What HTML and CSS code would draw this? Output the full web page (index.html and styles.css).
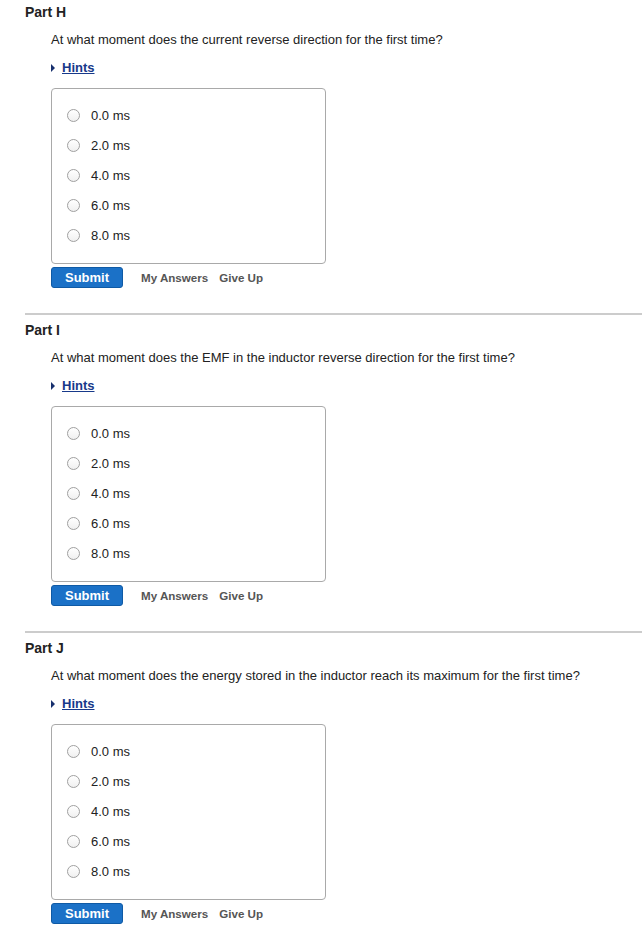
FILE: index.html
```html
<!DOCTYPE html>
<html>
<head>
<meta charset="utf-8">
<link rel="stylesheet" href="styles.css">
</head>
<body>
<div class="page">
  <section class="part">
    <h2 class="part-title">Part H</h2>
    <div class="part-body">
      <p class="question">At what moment does the current reverse direction for the first time?</p>
      <div class="hints"><span class="tri"></span><a href="#" class="hints-link">Hints</a></div>
      <div class="choices">
        <label class="choice"><span class="radio"></span><span>0.0 ms</span></label>
        <label class="choice"><span class="radio"></span><span>2.0 ms</span></label>
        <label class="choice"><span class="radio"></span><span>4.0 ms</span></label>
        <label class="choice"><span class="radio"></span><span>6.0 ms</span></label>
        <label class="choice"><span class="radio"></span><span>8.0 ms</span></label>
      </div>
      <div class="actions">
        <button class="submit">Submit</button>
        <a href="#" class="action-link">My Answers</a>
        <a href="#" class="action-link">Give Up</a>
      </div>
    </div>
  </section>
  <section class="part">
    <h2 class="part-title">Part I</h2>
    <div class="part-body">
      <p class="question">At what moment does the EMF in the inductor reverse direction for the first time?</p>
      <div class="hints"><span class="tri"></span><a href="#" class="hints-link">Hints</a></div>
      <div class="choices">
        <label class="choice"><span class="radio"></span><span>0.0 ms</span></label>
        <label class="choice"><span class="radio"></span><span>2.0 ms</span></label>
        <label class="choice"><span class="radio"></span><span>4.0 ms</span></label>
        <label class="choice"><span class="radio"></span><span>6.0 ms</span></label>
        <label class="choice"><span class="radio"></span><span>8.0 ms</span></label>
      </div>
      <div class="actions">
        <button class="submit">Submit</button>
        <a href="#" class="action-link">My Answers</a>
        <a href="#" class="action-link">Give Up</a>
      </div>
    </div>
  </section>
  <section class="part">
    <h2 class="part-title">Part J</h2>
    <div class="part-body">
      <p class="question">At what moment does the energy stored in the inductor reach its maximum for the first time?</p>
      <div class="hints"><span class="tri"></span><a href="#" class="hints-link">Hints</a></div>
      <div class="choices">
        <label class="choice"><span class="radio"></span><span>0.0 ms</span></label>
        <label class="choice"><span class="radio"></span><span>2.0 ms</span></label>
        <label class="choice"><span class="radio"></span><span>4.0 ms</span></label>
        <label class="choice"><span class="radio"></span><span>6.0 ms</span></label>
        <label class="choice"><span class="radio"></span><span>8.0 ms</span></label>
      </div>
      <div class="actions">
        <button class="submit">Submit</button>
        <a href="#" class="action-link">My Answers</a>
        <a href="#" class="action-link">Give Up</a>
      </div>
    </div>
  </section>
</div>
</body>
</html>
```
FILE: styles.css
```css
html, body {
  margin: 0;
  padding: 0;
  background: #fff;
}
body {
  font-family: "Liberation Sans", Arial, Helvetica, sans-serif;
  color: #222;
}
.page {
  padding-left: 25px;
  padding-top: 4px;
}
.part {
  padding-bottom: 25px;
}
.part + .part {
  border-top: 2px solid #cccccc;
  padding-top: 7px;
}
.part-title {
  margin: 0;
  font-size: 14px;
  line-height: 16px;
  font-weight: bold;
  color: #222;
}
.part-body {
  margin-left: 26px;
}
.question {
  margin: 12px 0 0 0;
  font-size: 13px;
  line-height: 15px;
  color: #222;
}
.hints {
  margin-top: 13px;
  display: flex;
  align-items: center;
  font-size: 13px;
  line-height: 15px;
}
.tri {
  width: 0;
  height: 0;
  border-top: 4px solid transparent;
  border-bottom: 4px solid transparent;
  border-left: 4px solid #17306e;
  margin-right: 7px;
}
.hints-link {
  color: #17398a;
  font-weight: bold;
  text-decoration: underline;
}
.choices {
  box-sizing: border-box;
  margin-top: 13px;
  width: 275px;
  border: 1px solid #a9a9a9;
  border-radius: 4px;
  padding: 11px 0 13px 14px;
  display: flex;
  flex-direction: column;
}
.choice {
  height: 30px;
  display: flex;
  align-items: center;
  font-size: 13px;
  color: #222;
}
.radio {
  box-sizing: border-box;
  width: 13px;
  height: 13px;
  border: 1px solid #a0a0a0;
  border-radius: 50%;
  background: linear-gradient(#ffffff, #f0f0f0);
  margin-right: 11px;
  margin-left: 1px;
}
.actions {
  margin-top: 3px;
  display: flex;
  align-items: center;
}
.submit {
  box-sizing: border-box;
  width: 72px;
  height: 21px;
  padding: 0;
  background: #1b71c7;
  border: 1px solid #0f5aa5;
  border-radius: 3px;
  color: #fff;
  font-family: "Liberation Sans", Arial, Helvetica, sans-serif;
  font-size: 13px;
  font-weight: bold;
  margin-right: 18px;
}
.action-link {
  font-size: 11.6px;
  font-weight: bold;
  color: #555;
  text-decoration: none;
  margin-right: 11px;
}
```
